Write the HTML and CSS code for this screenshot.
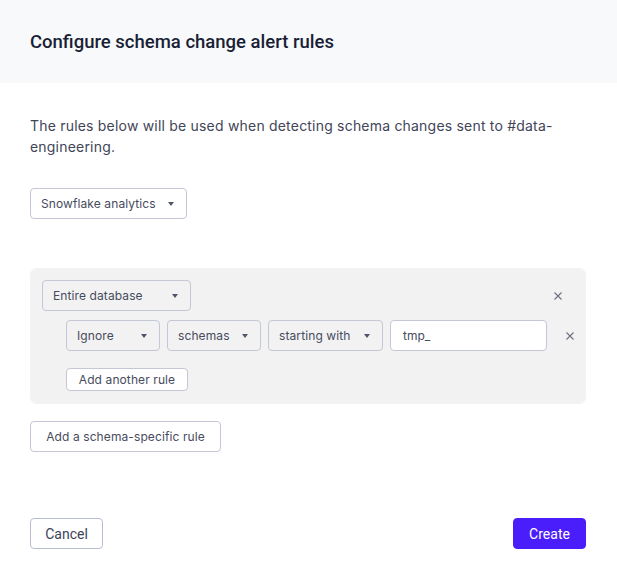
FILE: index.html
```html
<!DOCTYPE html>
<html>
<head>
<meta charset="utf-8">
<link rel="stylesheet" href="styles.css">
</head>
<body>
<div class="modal">
  <header class="header">
    <h1 class="title">Configure schema change alert rules</h1>
  </header>
  <main class="content">
    <p class="intro">The rules below will be used when detecting schema changes sent to #data-engineering.</p>
    <div class="select select-source"><span>Snowflake analytics</span><i class="caret"></i></div>

    <div class="panel">
      <div class="panel-head">
        <div class="select select-scope"><span>Entire database</span><i class="caret"></i></div>
        <button class="close close-scope" aria-label="Remove">
          <svg width="10" height="10" viewBox="0 0 10 10"><path d="M1.5 1.5L8.5 8.5M8.5 1.5L1.5 8.5" stroke="#6b6f80" stroke-width="1.1" fill="none"/></svg>
        </button>
      </div>
      <div class="rules">
        <div class="rule-row">
          <div class="select w-ignore"><span>Ignore</span><i class="caret"></i></div>
          <div class="select w-schemas"><span>schemas</span><i class="caret"></i></div>
          <div class="select w-starting"><span>starting with</span><i class="caret"></i></div>
          <div class="text-input">tmp_</div>
          <button class="close close-rule" aria-label="Remove rule">
            <svg width="10" height="10" viewBox="0 0 10 10"><path d="M1.5 1.5L8.5 8.5M8.5 1.5L1.5 8.5" stroke="#6b6f80" stroke-width="1.1" fill="none"/></svg>
          </button>
        </div>
        <button class="btn btn-small">Add another rule</button>
      </div>
    </div>

    <button class="btn btn-add">Add a schema-specific rule</button>
  </main>
  <footer class="footer">
    <button class="btn-footer btn-cancel">Cancel</button>
    <button class="btn-footer btn-create">Create</button>
  </footer>
</div>
</body>
</html>
```

FILE: styles.css
```css
* { box-sizing: border-box; }
html, body { margin: 0; padding: 0; background: #fff; }
body { width: 617px; height: 580px; font-family: Inter, "Liberation Sans", sans-serif; color: #3c4257; }

.modal { display: flex; flex-direction: column; height: 580px; }

.header {
  background: #f8f9fb;
  height: 83px;
  padding: 0 30px;
  display: flex;
  align-items: center;
}
.title {
  margin: 0;
  font-family: Roboto, "Liberation Sans", sans-serif;
  font-weight: 500;
  font-size: 18.5px;
  color: #1a1f36;
}

.content { padding: 32px 30px 0; display: flex; flex-direction: column; align-items: flex-start; }

.intro {
  margin: 0 0 31px;
  font-size: 14px;
  line-height: 21px;
  letter-spacing: 0.2px;
  color: #414558;
  width: 556px;
}

.select {
  height: 31px;
  border: 1px solid #c4c7d6;
  border-radius: 4px;
  display: flex;
  align-items: center;
  justify-content: space-between;
  padding: 0 12px 0 10px;
  font-size: 12px;
  letter-spacing: 0.1px;
  color: #474b5e;
  background: transparent;
}
.caret {
  width: 0; height: 0;
  border-left: 3.5px solid transparent;
  border-right: 3.5px solid transparent;
  border-top: 4px solid #4f566b;
}
.select-source { width: 157px; background: #fff; }

.panel {
  margin-top: 49px;
  width: 556px;
  background: #f2f2f3;
  border-radius: 7px;
  padding: 12px 0 13px 12px;
}
.panel-head { display: flex; align-items: center; justify-content: space-between; padding-right: 22px; }
.select-scope { width: 149px; }

.close {
  border: 0; background: none; padding: 0;
  width: 12px; height: 12px;
  display: flex; align-items: center; justify-content: center;
  cursor: pointer;
}

.rules { padding-left: 24px; margin-top: 9px; display: flex; flex-direction: column; align-items: flex-start; }
.rule-row { display: flex; align-items: center; gap: 7px; }
.w-ignore { width: 94px; }
.w-schemas { width: 94px; }
.w-starting { width: 115px; }
.text-input {
  width: 157px; height: 31px;
  border: 1px solid #c4c7d6; border-radius: 4px;
  background: #fff;
  font-size: 12px; color: #474b5e;
  display: flex; align-items: center;
  padding: 0 12px;
}
.close-rule { margin-left: 10px; }

.btn {
  font-family: Inter, "Liberation Sans", sans-serif;
  background: #fff;
  border: 1px solid #c4c7d6;
  border-radius: 4px;
  color: #474b5e;
  font-size: 12px;
  letter-spacing: 0.1px;
  cursor: pointer;
}
.btn-small { margin-top: 17px; width: 122px; height: 23px; padding: 0; }
.btn-add { margin-top: 17px; width: 191px; height: 31px; padding: 0; }

.footer {
  margin-top: auto;
  padding: 0 31px 31px 30px;
  display: flex;
  justify-content: space-between;
}
.btn-footer {
  font-family: Roboto, "Liberation Sans", sans-serif;
  font-size: 14px;
  width: 73px; height: 31px;
  border-radius: 4px;
  cursor: pointer;
  padding: 0;
}
.btn-cancel { background: #fff; border: 1px solid #b9bdd0; color: #3c4257; }
.btn-create { background: #4a1dfb; border: 1px solid #4a1dfb; color: #fff; }
```
